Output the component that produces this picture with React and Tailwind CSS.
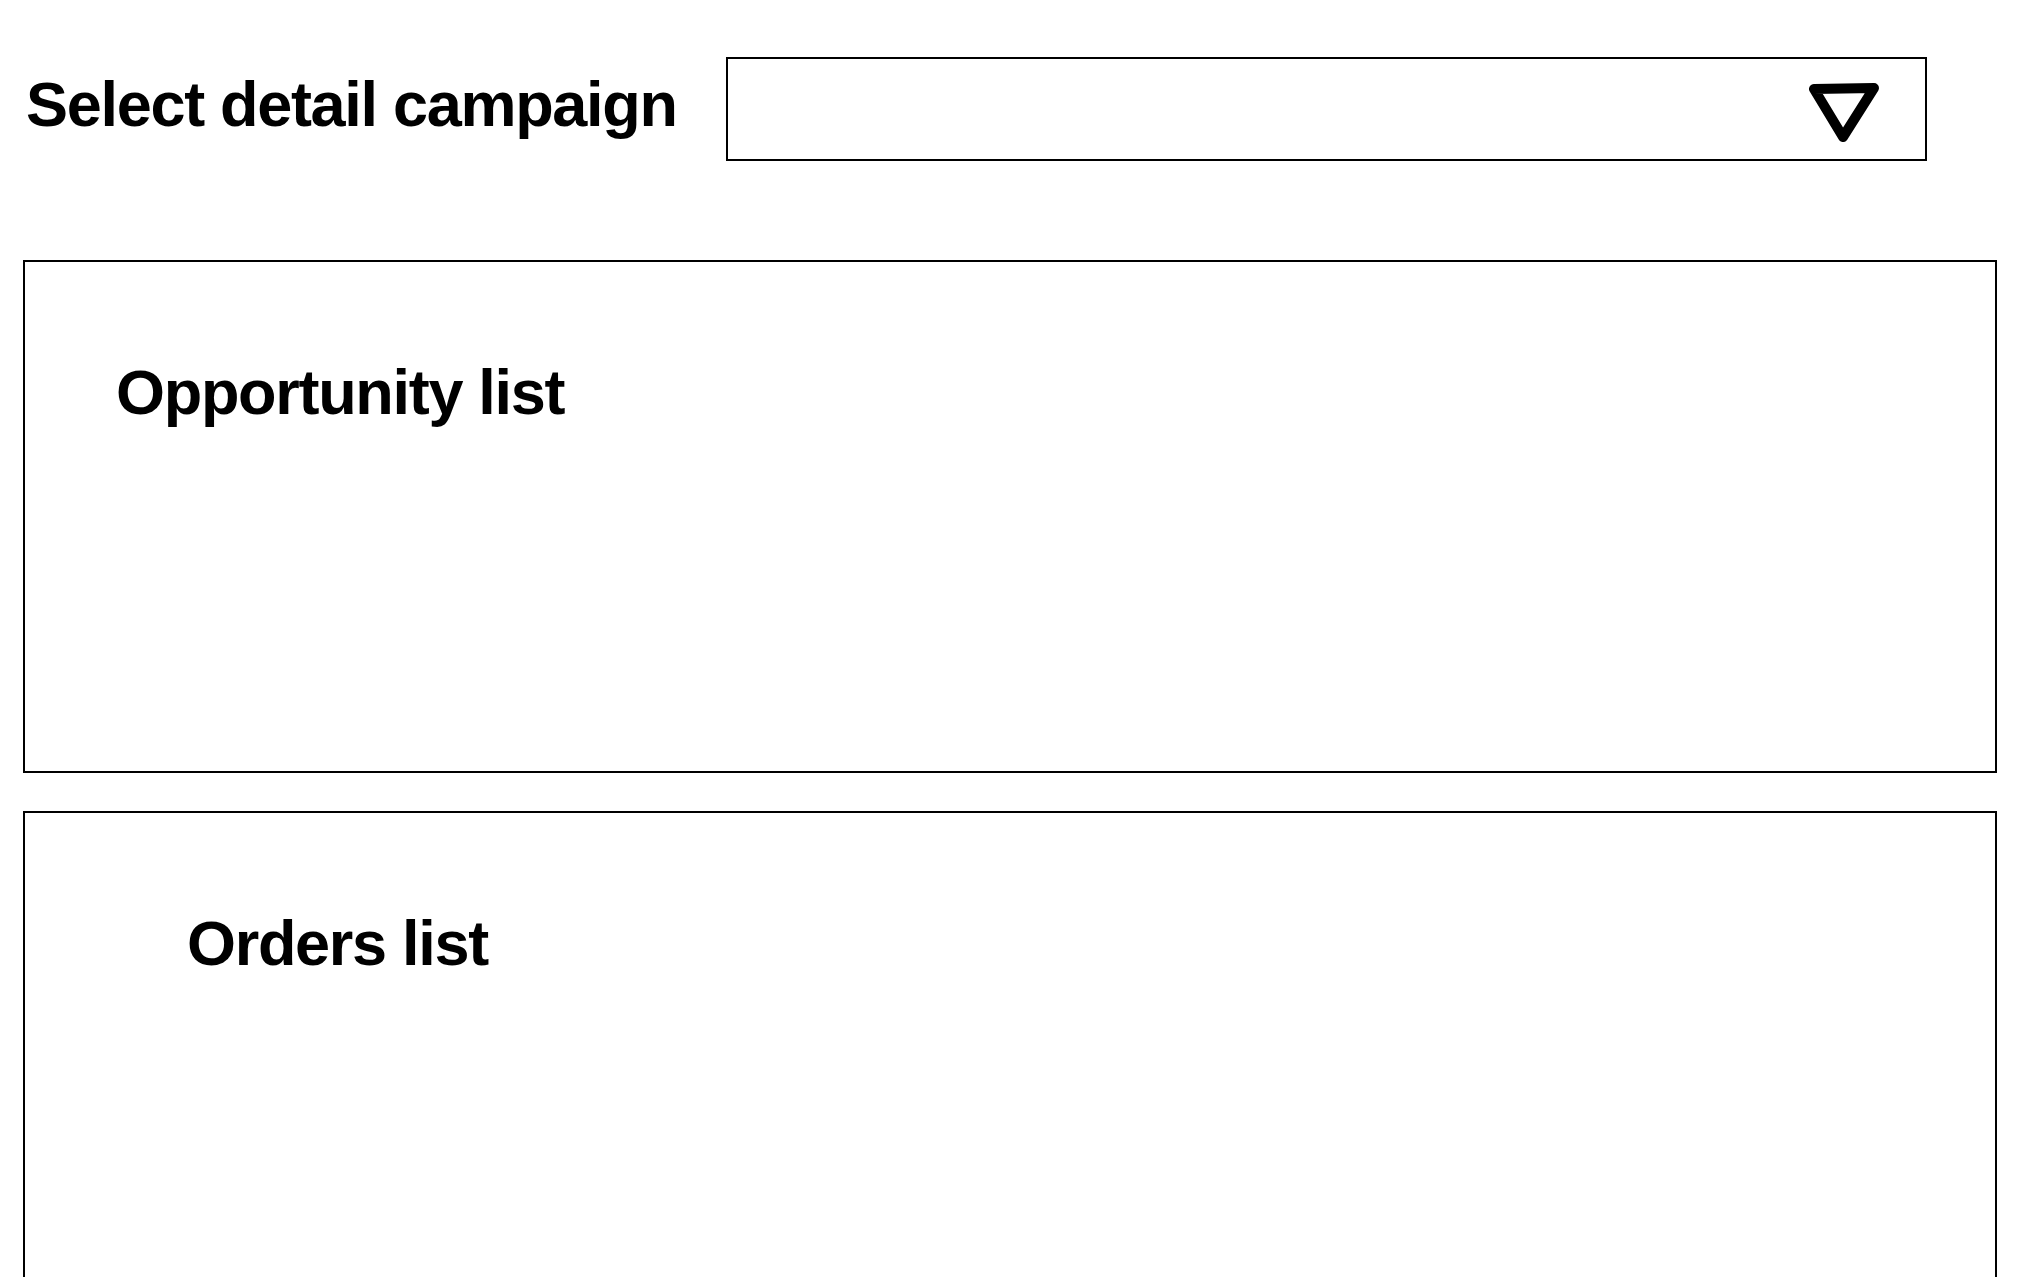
import React from 'react';

// Campaign detail wireframe: campaign picker on top, two list panels below.
const heading = "font-['Liberation_Sans',Arial,sans-serif] font-bold text-[63px] leading-none tracking-[-1.3px] text-black";

function DropdownArrow() {
  return (
    <svg width="72" height="60" viewBox="0 0 72 60" className="blur-[0.6px]">
      <polygon points="7,6 67,5 36,54" fill="none" stroke="#000" strokeWidth="10" strokeLinejoin="round" />
    </svg>
  );
}

function Panel({ title, offset }) {
  return (
    <div className="border-2 border-black h-[513px] bg-white">
      <h2 className={`${heading} pt-[99px] ${offset}`}>{title}</h2>
    </div>
  );
}

export default function App() {
  return (
    <div className="min-h-screen bg-white overflow-hidden">
      {/* Campaign picker */}
      <div className="flex items-start">
        <label className={`${heading} mt-[73px] ml-[26px]`}>Select detail campaign</label>
        <div className="ml-auto mr-[102px] mt-[57px] w-[1201px] h-[104px] border-2 border-black flex justify-end items-start pt-[24px] pr-[46px]">
          <DropdownArrow />
        </div>
      </div>

      {/* Lists */}
      <div className="flex flex-col gap-[38px] mt-[99px] ml-[23px] w-[1974px]">
        <Panel title="Opportunity list" offset="pl-[91px]" />
        <Panel title="Orders list" offset="pl-[162px]" />
      </div>
    </div>
  );
}
